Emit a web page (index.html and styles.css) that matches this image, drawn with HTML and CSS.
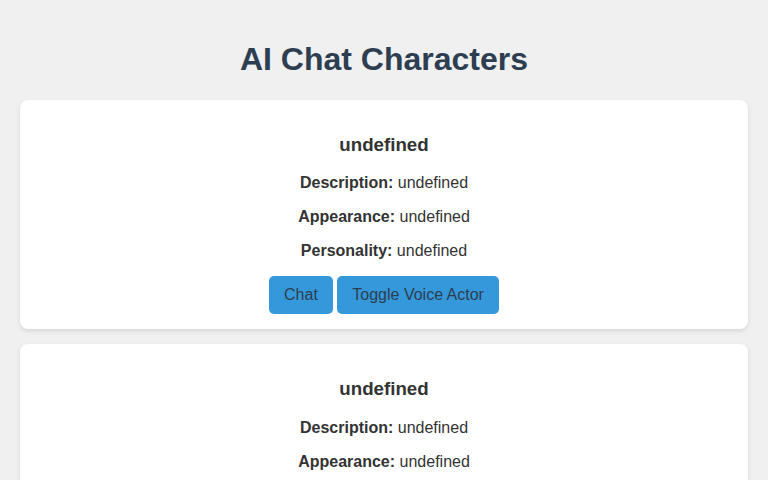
FILE: index.html
```html
<!DOCTYPE html>
<html lang="en">
<head>
<meta charset="utf-8">
<title>AI Chat Characters</title>
<link rel="stylesheet" href="styles.css">
</head>
<body>
<h1 class="title">AI Chat Characters</h1>
<div class="list">
  <div class="card">
    <h3 class="name">undefined</h3>
    <p><strong>Description:</strong> undefined</p>
    <p><strong>Appearance:</strong> undefined</p>
    <p><strong>Personality:</strong> undefined</p>
    <div class="actions">
      <button class="btn">Chat</button>
      <button class="btn">Toggle Voice Actor</button>
    </div>
  </div>
  <div class="card">
    <h3 class="name">undefined</h3>
    <p><strong>Description:</strong> undefined</p>
    <p><strong>Appearance:</strong> undefined</p>
    <p><strong>Personality:</strong> undefined</p>
    <div class="actions">
      <button class="btn">Chat</button>
      <button class="btn">Toggle Voice Actor</button>
    </div>
  </div>
</div>
</body>
</html>
```
FILE: styles.css
```css
body {
  margin: 0;
  padding: 20px;
  background: #f0f0f0;
  font-family: "Liberation Sans", Arial, sans-serif;
  color: #333;
}
.title {
  text-align: center;
  color: #2c3e50;
  font-size: 32px;
  margin: 21.44px 0;
}
.card {
  background: #fff;
  border-radius: 8px;
  padding: 15px;
  margin-bottom: 15px;
  box-shadow: 0 2px 4px rgba(0, 0, 0, 0.1);
  text-align: center;
}
.name {
  font-size: 18.72px;
  margin: 18.72px 0;
}
.card p {
  margin: 16px 0;
}
.btn {
  background: #3498db;
  color: #2c3e50;
  border: none;
  border-radius: 5px;
  padding: 10px 15px;
  font-family: "Liberation Sans", Arial, sans-serif;
  font-size: 16px;
  cursor: pointer;
}
```
